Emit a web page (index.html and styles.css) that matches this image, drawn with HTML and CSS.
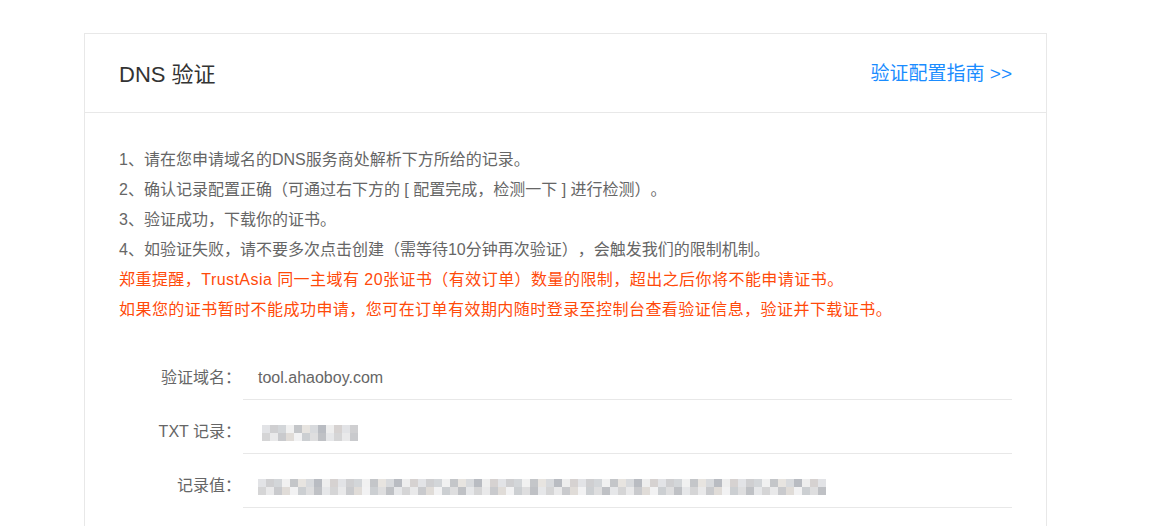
FILE: index.html
```html
<!DOCTYPE html>
<html lang="zh-CN">
<head>
<meta charset="UTF-8">
<meta name="viewport" content="width=device-width, initial-scale=1.0">
<title>DNS 验证</title>
<link rel="stylesheet" href="styles.css">
</head>
<body>

<div class="card">
  <div class="card-header">
    <h2>DNS 验证</h2>
    <a href="#" class="guide-link">验证配置指南 &gt;&gt;</a>
  </div>

  <div class="card-body">
    <div class="tips">
      <p>1、请在您申请域名的DNS服务商处解析下方所给的记录。</p>
      <p>2、确认记录配置正确（可通过右下方的 [ 配置完成，检测一下 ] 进行检测）。</p>
      <p>3、验证成功，下载你的证书。</p>
      <p>4、如验证失败，请不要多次点击创建（需等待10分钟再次验证），会触发我们的限制机制。</p>
      <p class="warn">郑重提醒，TrustAsia 同一主域有 20张证书（有效订单）数量的限制，超出之后你将不能申请证书。</p>
      <p class="warn">如果您的证书暂时不能成功申请，您可在订单有效期内随时登录至控制台查看验证信息，验证并下载证书。</p>
    </div>

    <div class="records">
      <div class="record-row">
        <div class="record-label">验证域名：</div>
        <div class="record-value">tool.ahaoboy.com</div>
      </div>
      <div class="record-row">
        <div class="record-label">TXT 记录：</div>
        <div class="record-value"><span class="mosaic mosaic-short"></span></div>
      </div>
      <div class="record-row">
        <div class="record-label">记录值：</div>
        <div class="record-value"><span class="mosaic mosaic-long"></span></div>
      </div>
    </div>
  </div>
</div>

</body>
</html>
```

FILE: styles.css
```css
body {
  margin: 0;
  padding: 33px 0 0 84px;
  background: #fff;
  font-family: "Liberation Sans", Arial, "Noto Sans CJK SC", sans-serif;
  color: #666;
  text-spacing-trim: space-all;
}

.card {
  width: 961px;
  border: 1px solid #e8e8e8;
  border-bottom: none;
  background: #fff;
}

.card-header {
  display: flex;
  align-items: center;
  justify-content: space-between;
  height: 75px;
  padding: 0 34px 3px;
  border-bottom: 1px solid #e8e8e8;
}

.card-header h2 {
  margin: 0;
  font-size: 22px;
  font-weight: normal;
  color: #333;
}

.guide-link {
  font-size: 19px;
  color: #1a8cff;
  text-decoration: none;
}

.card-body {
  padding: 32px 34px 40px;
}

.tips p {
  margin: 0;
  font-size: 16px;
  line-height: 30px;
  color: #666;
}

.tips p.warn {
  color: #ff4a0a;
  letter-spacing: 0.45px;
}

.records {
  margin-top: 21px;
}

.record-row {
  display: flex;
  font-size: 16px;
}

.record-label {
  width: 122px;
  flex-shrink: 0;
  text-align: right;
  padding: 22px 2px 12px 0;
  line-height: 20px;
  color: #666;
}

.record-value {
  flex: 1;
  padding: 22px 0 11px 15px;
  line-height: 20px;
  border-bottom: 1px solid #e8e8e8;
  color: #666;
}

/* 打码区域 */
.mosaic {
  display: inline-block;
  vertical-align: middle;
  height: 16px;
  background:
    repeating-linear-gradient(90deg, #e2e3e6 0 8px, #cfcfd1 8px 16px, #d3d6d9 16px 24px, #f1f1f1 24px 32px, #c4c6c9 32px 40px, #e7e4e0 40px 48px, #d8dadd 48px 56px, #b9bcc2 56px 64px, #eeeeee 64px 72px, #d6d2d1 72px 80px) top / 100% 8px no-repeat,
    repeating-linear-gradient(90deg, #d5d5d6 0 8px, #e9e9ea 8px 16px, #c9cacd 16px 24px, #e0dcd8 24px 32px, #f2f2f3 32px 40px, #cccfd2 40px 48px, #dededf 48px 56px, #bfc1c5 56px 64px, #e6e7e9 64px 72px) bottom / 100% 8px no-repeat;
}

.mosaic-short {
  width: 96px;
  margin-left: 4px;
}

.mosaic-long {
  width: 568px;
}
```
